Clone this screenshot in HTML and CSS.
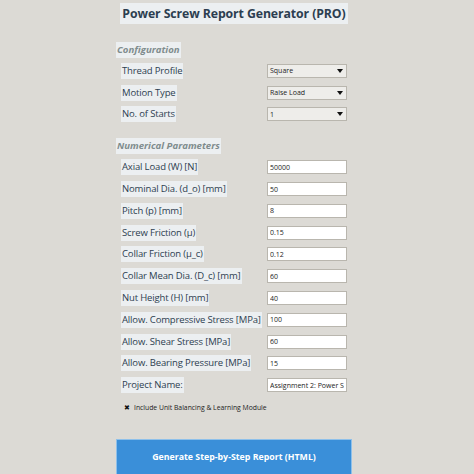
FILE: index.html
```html
<!DOCTYPE html>
<html lang="en">
<head>
    <meta charset="UTF-8">
    <meta name="viewport" content="width=device-width, initial-scale=1.0">
    <title>Power Screw Report Generator (PRO)</title>
    <link rel="stylesheet" href="styles.css">
</head>
<body>
    <div class="app">
        <header class="title-row">
            <h1 class="title">Power Screw Report Generator (PRO)</h1>
        </header>

        <section class="group">
            <h2 class="group-title">Configuration</h2>
            <div class="row">
                <span class="label">Thread Profile</span>
                <div class="combo"><span>Square</span><span class="arrow"></span></div>
            </div>
            <div class="row">
                <span class="label">Motion Type</span>
                <div class="combo"><span>Raise Load</span><span class="arrow"></span></div>
            </div>
            <div class="row">
                <span class="label">No. of Starts</span>
                <div class="combo"><span>1</span><span class="arrow"></span></div>
            </div>
        </section>

        <section class="group">
            <h2 class="group-title">Numerical Parameters</h2>
            <div class="row"><span class="label">Axial Load (W) [N]</span><input class="entry" value="50000"></div>
            <div class="row"><span class="label">Nominal Dia. (d_o) [mm]</span><input class="entry" value="50"></div>
            <div class="row"><span class="label">Pitch (p) [mm]</span><input class="entry" value="8"></div>
            <div class="row"><span class="label">Screw Friction (μ)</span><input class="entry" value="0.15"></div>
            <div class="row"><span class="label">Collar Friction (μ_c)</span><input class="entry" value="0.12"></div>
            <div class="row"><span class="label">Collar Mean Dia. (D_c) [mm]</span><input class="entry" value="60"></div>
            <div class="row"><span class="label">Nut Height (H) [mm]</span><input class="entry" value="40"></div>
            <div class="row"><span class="label">Allow. Compressive Stress [MPa]</span><input class="entry" value="100"></div>
            <div class="row"><span class="label">Allow. Shear Stress [MPa]</span><input class="entry" value="60"></div>
            <div class="row"><span class="label">Allow. Bearing Pressure [MPa]</span><input class="entry" value="15"></div>
            <div class="row"><span class="label">Project Name:</span><input class="entry" value="Assignment 2: Power Screw Design"></div>
        </section>

        <label class="check">
            <span class="check-mark">✖</span>
            <span>Include Unit Balancing &amp; Learning Module</span>
        </label>

        <button type="button" class="generate-btn">Generate Step-by-Step Report (HTML)</button>
    </div>
</body>
</html>
```

FILE: styles.css
```css
:root {
    --bg: #dcdad5;
    --label-bg: #eceff1;
    --text: #2c3e50;
    --muted: #7f8c8d;
    --field-border: #b9b6ae;
    --blue: #3a8fd9;
    --blue-border: #8ec0ea;
}

* {
    margin: 0;
    padding: 0;
    box-sizing: border-box;
}

body {
    background: var(--bg);
    font-family: "Open Sans", "Noto Sans", sans-serif;
    color: var(--text);
    height: 474px;
    overflow: hidden;
}

.app {
    width: 236px;
    margin-left: 116px;
    display: flex;
    flex-direction: column;
}

.title-row {
    display: flex;
    justify-content: center;
    padding-top: 3px;
}

.title {
    background: var(--label-bg);
    font-size: 12.3px;
    font-weight: 700;
    line-height: 21px;
    padding: 0 2px;
    white-space: nowrap;
    letter-spacing: -0.1px;
}

.group {
    display: flex;
    flex-direction: column;
}

.group:first-of-type {
    margin-top: 18px;
}

.group + .group {
    margin-top: 13px;
}

.group-title {
    align-self: flex-start;
    background: var(--label-bg);
    color: var(--muted);
    font-size: 9.6px;
    font-weight: 700;
    font-style: italic;
    line-height: 16px;
    padding: 0 1px;
    margin-bottom: 2px;
}

.row {
    display: flex;
    align-items: center;
    justify-content: space-between;
    height: 21.8px;
    padding-left: 5px;
    padding-right: 5px;
}

.label {
    background: var(--label-bg);
    font-size: 9.5px;
    line-height: 16px;
    padding: 0 1px;
    letter-spacing: -0.15px;
    white-space: nowrap;
}

.combo,
.entry {
    width: 80px;
    height: 14px;
    border: 1px solid var(--field-border);
    font-family: "Open Sans", sans-serif;
    font-size: 7px;
    color: #222;
}

.combo {
    display: flex;
    align-items: center;
    justify-content: space-between;
    background: #eeedea;
    padding-left: 2px;
}

.arrow {
    width: 11px;
    height: 100%;
    background: #eeedea;
    position: relative;
}

.arrow::after {
    content: "";
    position: absolute;
    left: 2px;
    top: 4px;
    border-left: 3px solid transparent;
    border-right: 3px solid transparent;
    border-top: 4px solid #111;
}

.entry {
    background: #fff;
    padding: 0 2px;
    outline: none;
}

.check {
    display: flex;
    align-items: center;
    gap: 4px;
    margin-top: 7px;
    padding-left: 8px;
    font-size: 6.8px;
    color: #222;
    white-space: nowrap;
}

.check-mark {
    font-size: 7px;
    color: #111;
}

.generate-btn {
    margin-top: 27px;
    height: 40px;
    flex-shrink: 0;
    background: var(--blue);
    border: 1px solid var(--blue-border);
    color: #fff;
    font-family: "Open Sans", sans-serif;
    font-size: 8.8px;
    font-weight: 700;
    display: flex;
    justify-content: center;
    padding-top: 11px;
}
```
